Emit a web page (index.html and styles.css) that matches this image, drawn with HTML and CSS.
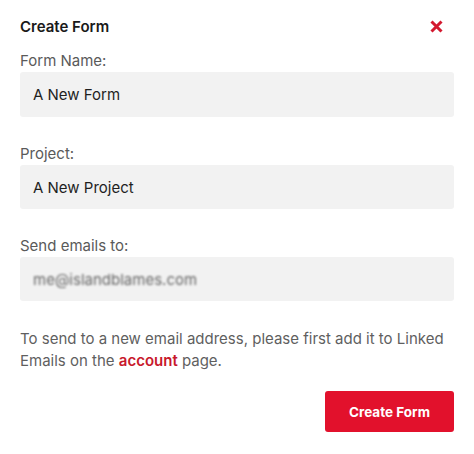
FILE: index.html
```html
<!DOCTYPE html>
<html lang="en">
<head>
<meta charset="utf-8">
<title>Create Form</title>
<link rel="stylesheet" href="styles.css">
</head>
<body>
<div class="modal">
  <div class="header">
    <h1 class="title">Create Form</h1>
    <button class="close" aria-label="Close">
      <svg width="13" height="13" viewBox="0 0 13 13"><path d="M1.5 1.5 L11.5 11.5 M11.5 1.5 L1.5 11.5" stroke="#d3192f" stroke-width="3" stroke-linecap="butt" fill="none"/></svg>
    </button>
  </div>
  <div class="field">
    <label class="label">Form Name:</label>
    <div class="input">A New Form</div>
  </div>
  <div class="field">
    <label class="label">Project:</label>
    <div class="input">A New Project</div>
  </div>
  <div class="field">
    <label class="label">Send emails to:</label>
    <div class="input"><span class="blur">me@islandblames.com</span></div>
  </div>
  <p class="help">To send to a new email address, please first add it to Linked Emails on the <a class="link" href="#">account</a> page.</p>
  <div class="actions">
    <button class="primary">Create Form</button>
  </div>
</div>
</body>
</html>
```
FILE: styles.css
```css
* { box-sizing: border-box; }
html, body { margin: 0; padding: 0; background: #ffffff; }
body { font-family: Inter, "Noto Sans", sans-serif; color: #1c1c1c; }
.modal { width: 474px; padding: 15px 20px 0 20px; display: flex; flex-direction: column; }
.header { display: flex; justify-content: space-between; align-items: center; height: 22px; }
.title { margin: 0; font-size: 15px; font-weight: 600; color: #1a1a1a; letter-spacing: 0; }
.close { border: 0; background: none; padding: 0; margin-right: 11px; width: 13px; height: 13px; display: flex; }
.field { display: flex; flex-direction: column; margin-top: 13px; }
.field + .field { margin-top: 26px; }
.label { font-size: 15px; color: #5a5a5a; line-height: 22px; }
.input { height: 45px; background: #f2f2f2; border-radius: 3px; padding: 0 13px; display: flex; align-items: center; font-size: 15px; color: #1f1f1f; }
.field + .field .input { height: 44px; }
.blur { filter: blur(1.3px); color: #666666; font-size: 15px; }
.help { margin: 27px 0 0 0; font-size: 15px; line-height: 22px; color: #5f5f5f; }
.link { color: #c8192c; font-weight: 600; text-decoration: none; }
.actions { display: flex; justify-content: flex-end; margin-top: 19px; }
.primary { width: 129px; height: 41px; border: 0; border-radius: 3px; background: #e2112c; color: #ffffff; font-family: Inter, "Noto Sans", sans-serif; font-size: 13.5px; font-weight: 700; }
```
